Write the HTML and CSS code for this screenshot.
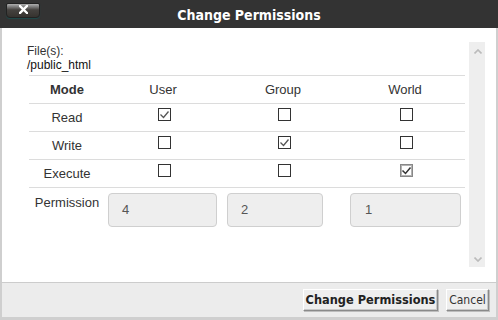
FILE: index.html
```html
<!DOCTYPE html>
<html>
<head>
<meta charset="utf-8">
<link rel="stylesheet" href="styles.css">
</head>
<body>
<div class="dialog">
  <div class="titlebar">
    <div class="tb-left"><button class="close-btn" aria-label="Close"><svg viewBox="0 0 9 9" width="9" height="9"><path d="M1 1 L8 8 M8 1 L1 8" stroke="#fff" stroke-width="2.4" stroke-linecap="square"/></svg></button></div>
    <div class="title">Change Permissions</div>
    <div class="tb-right"></div>
  </div>
  <div class="body">
    <div class="content">
      <div class="files">File(s):</div>
      <div class="path">/public_html</div>
      <div class="perm-table">
        <div class="row head">
          <div class="cell mode-h">Mode</div>
          <div class="cell">User</div>
          <div class="cell">Group</div>
          <div class="cell">World</div>
        </div>
        <div class="row">
          <div class="cell mode">Read</div>
          <div class="cell"><span class="cb checked"><svg viewBox="0 0 11 11" width="11" height="11"><path d="M1.5 5.5 L4.5 8.5 L9.5 2.5" fill="none" stroke="#555" stroke-width="1.3"/></svg></span></div>
          <div class="cell"><span class="cb"></span></div>
          <div class="cell"><span class="cb"></span></div>
        </div>
        <div class="row">
          <div class="cell mode">Write</div>
          <div class="cell"><span class="cb"></span></div>
          <div class="cell"><span class="cb checked"><svg viewBox="0 0 11 11" width="11" height="11"><path d="M1.5 5.5 L4.5 8.5 L9.5 2.5" fill="none" stroke="#555" stroke-width="1.3"/></svg></span></div>
          <div class="cell"><span class="cb"></span></div>
        </div>
        <div class="row last">
          <div class="cell mode">Execute</div>
          <div class="cell"><span class="cb"></span></div>
          <div class="cell"><span class="cb"></span></div>
          <div class="cell"><span class="cb focus"><svg viewBox="0 0 13 13" width="13" height="13"><rect x="0.5" y="0.5" width="12" height="12" fill="none" stroke="#111" stroke-width="1" stroke-dasharray="1 1"/><rect x="1.5" y="1.5" width="10" height="10" fill="none" stroke="#666" stroke-width="1" stroke-dasharray="1 1"/><path d="M2.5 6.5 L5.5 9.5 L10.5 3.5" fill="none" stroke="#333" stroke-width="1.5"/></svg></span></div>
        </div>
        <div class="perm-row">
          <div class="perm-label">Permission</div>
          <div class="perm-box in1">4</div>
          <div class="perm-box in2">2</div>
          <div class="perm-box in3">1</div>
        </div>
      </div>
    </div>
    <div class="scrollbar">
      <svg class="arrow" viewBox="0 0 8 5" width="8" height="5"><path d="M0.5 4.5 L4 1 L7.5 4.5" fill="none" stroke="#bbb" stroke-width="1.6"/></svg>
      <svg class="arrow" viewBox="0 0 8 5" width="8" height="5"><path d="M0.5 0.5 L4 4 L7.5 0.5" fill="none" stroke="#bbb" stroke-width="1.6"/></svg>
    </div>
  </div>
  <div class="footer">
    <button class="btn primary">Change Permissions</button>
    <button class="btn cancel">Cancel</button>
  </div>
</div>
</body>
</html>
```
FILE: styles.css
```css
html, body {
  margin: 0;
  padding: 0;
  background: #fff;
}
.dialog {
  width: 498px;
  height: 320px;
  display: flex;
  flex-direction: column;
  box-sizing: border-box;
  border-bottom: 3px solid #cfcfcf;
  font-family: "Liberation Sans", Arial, sans-serif;
  color: #333;
}
.titlebar {
  height: 28px;
  background: #333333;
  display: grid;
  grid-template-columns: 1fr auto 1fr;
  align-items: center;
}
.tb-left {
  display: flex;
  align-items: flex-start;
  height: 28px;
}
.close-btn {
  margin: 2px 0 0 6px;
  width: 34px;
  height: 15px;
  padding: 0;
  border: 1px solid #222;
  border-radius: 2px 2px 4px 4px;
  background: linear-gradient(#b0b0b0 0%, #808080 20%, #45423f 45%, #36332f 100%);
  box-shadow: 0 1px 1px #1f4a4a;
  display: flex;
  align-items: center;
  justify-content: center;
}
.close-btn svg {
  display: block;
  margin-top: -1px;
}
.title {
  color: #fff;
  font-family: "DejaVu Sans Condensed", "DejaVu Sans", sans-serif;
  font-weight: bold;
  font-size: 14px;
  line-height: 28px;
  padding-top: 1px;
}
.body {
  flex: 1;
  display: flex;
  border-left: 2px solid #cfcfcf;
  border-right: 2px solid #cfcfcf;
  background: #fff;
  min-height: 0;
}
.content {
  width: 440px;
  padding: 16px 0 0 25px;
}
.files, .path {
  font-size: 12px;
  line-height: 14px;
}
.files { color: #333; }
.path { color: #111; }
.perm-table {
  margin: 3px 2px 0 2px;
  width: 436px;
}
.row {
  display: grid;
  grid-template-columns: 76px 116px 124px 120px;
  height: 28px;
  box-sizing: border-box;
  border-top: 1px solid #dcdcdc;
  align-items: center;
  font-size: 13px;
}
.row.last {
  height: 29px;
  border-bottom: 1px solid #dcdcdc;
}
.cell {
  text-align: center;
  line-height: 15px;
}
.mode-h {
  font-weight: bold;
}
.cb {
  display: inline-block;
  width: 13px;
  height: 13px;
  box-sizing: border-box;
  border: 1px solid #333;
  background: #fff;
  vertical-align: top;
  margin-top: -2px;
  position: relative;
  left: 1px;
}
.cb svg {
  display: block;
}
.cb.focus {
  border: none;
}
.perm-row {
  display: flex;
  align-items: flex-start;
  margin-top: 5px;
}
.perm-label {
  width: 76px;
  font-size: 13px;
  line-height: 15px;
  margin-top: 2px;
  text-align: center;
}
.perm-box {
  height: 34px;
  box-sizing: border-box;
  border: 1px solid #cfcfcf;
  border-radius: 4px;
  background: #eeeeee;
  color: #555;
  font-size: 13px;
  line-height: 32px;
  padding-left: 13px;
}
.in1 { margin-left: 3px; width: 109px; }
.in2 { margin-left: 10px; width: 96px; }
.in3 { margin-left: 27px; width: 111px; padding-left: 14px; }
.scrollbar {
  width: 16px;
  margin: 14px 0 15px 2px;
  background: #eeeeee;
  display: flex;
  flex-direction: column;
  justify-content: space-between;
  align-items: center;
  padding: 7px 0 5px 0;
  box-sizing: border-box;
}
.arrow {
  display: block;
  margin-left: 1px;
}
.footer {
  height: 35px;
  box-sizing: border-box;
  border-top: 1px solid #cccccc;
  border-left: 2px solid #cfcfcf;
  border-right: 2px solid #cfcfcf;
  background: #ececec;
  display: flex;
  justify-content: flex-end;
  align-items: center;
  gap: 8px;
  padding-right: 7px;
}
.btn {
  height: 22px;
  padding: 0;
  border: 1px solid;
  border-color: #ffffff #8a8a8a #8a8a8a #ffffff;
  box-shadow: inset -1px -1px 0 #c8c8c8, 1px 1px 0 #bdbdbd;
  background: #eeeeee;
  color: #333;
  font-family: "DejaVu Sans", sans-serif;
  font-size: 11.4px;
}
.btn.primary {
  width: 135px;
  font-weight: bold;
  color: #222;
}
.btn.cancel {
  width: 43px;
  font-family: "DejaVu Sans Condensed", "DejaVu Sans", sans-serif;
  font-size: 12px;
}
```
